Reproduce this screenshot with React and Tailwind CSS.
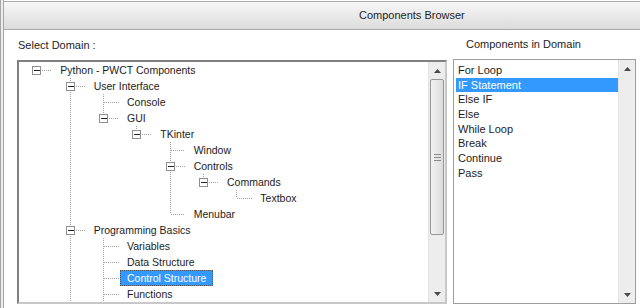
const W = 100 / 3;

const TREE = [
  { label: "Python - PWCT Components", level: 0, open: true, last: true, guides: [], root: true },
  { label: "User Interface", level: 1, open: true, last: false, guides: [false] },
  { label: "Console", level: 2, last: false, guides: [false, true] },
  { label: "GUI", level: 2, open: true, last: true, guides: [false, true] },
  { label: "TKinter", level: 3, open: true, last: true, guides: [false, true, false] },
  { label: "Window", level: 4, last: false, guides: [false, true, false, false] },
  { label: "Controls", level: 4, open: true, last: false, guides: [false, true, false, false] },
  { label: "Commands", level: 5, open: true, last: true, guides: [false, true, false, false, true] },
  { label: "Textbox", level: 6, last: true, guides: [false, true, false, false, true, false] },
  { label: "Menubar", level: 4, last: true, guides: [false, true, false, false] },
  { label: "Programming Basics", level: 1, open: true, last: false, guides: [false] },
  { label: "Variables", level: 2, last: false, guides: [false, true] },
  { label: "Data Structure", level: 2, last: false, guides: [false, true] },
  { label: "Control Structure", level: 2, last: false, guides: [false, true], selected: true },
  { label: "Functions", level: 2, last: false, guides: [false, true] },
];

const ITEMS = ["For Loop", "IF Statement", "Else IF", "Else", "While Loop", "Break", "Continue", "Pass"];

const LINE = "#a3a3a3";

// dotted tree connectors for one row
function Connectors({ n }) {
  const width = (n.level + 1) * W;
  const cx = Math.floor(n.level * W + W / 2) + 0.5;
  const end = Math.floor(width) - 1;
  return (
    <svg width={width} height="16" className="shrink-0" shapeRendering="crispEdges">
      {n.guides.map((g, k) => {
        if (!g) return null;
        const x = Math.floor(k * W + W / 2) + 0.5;
        return <line key={k} x1={x} y1="0" x2={x} y2="16" stroke={LINE} strokeDasharray="1 1" />;
      })}
      {!n.root && <line x1={cx} y1="0" x2={cx} y2="8" stroke={LINE} strokeDasharray="1 1" />}
      {!n.last && <line x1={cx} y1="8" x2={cx} y2="16" stroke={LINE} strokeDasharray="1 1" />}
      <line x1={n.open ? cx + 5 : cx} y1="8.5" x2={end} y2="8.5" stroke={LINE} strokeDasharray="1 1" />
      {n.open && (
        <g>
          <rect x={cx - 4.5} y="4.5" width="8" height="8" fill="#fff" stroke="#8f8f8f" />
          <line x1={cx - 2.5} y1="8.5" x2={cx + 3.5} y2="8.5" stroke="#222" />
        </g>
      )}
    </svg>
  );
}

function TreeRow({ n }) {
  return (
    <div className="flex h-[16px] items-center">
      <Connectors n={n} />
      <span
        className={
          n.selected
            ? "h-[16px] px-[6px] leading-[14px] bg-[#3399ff] text-white border border-dotted border-[#555]"
            : "h-[16px] px-[7px] leading-[16px] text-[#1c1c1c]"
        }
      >
        {n.label}
      </span>
    </div>
  );
}

function Arrow({ up }) {
  return (
    <svg width="7" height="4" viewBox="0 0 7 4">
      {up ? <path d="M3.5 0L7 4H0Z" fill="#4a4a4a" /> : <path d="M0 0H7L3.5 4Z" fill="#4a4a4a" />}
    </svg>
  );
}

function ScrollBar({ thumb }) {
  return (
    <div className="w-[17px] flex flex-col bg-[#ededed] border-l border-[#e3e3e3]">
      <div className="h-[17px] flex items-center justify-center">
        <Arrow up />
      </div>
      {thumb ? (
        <div className="mx-[1px] h-[156px] rounded-[2px] border border-[#979797] bg-gradient-to-r from-[#f2f2f2] to-[#dcdcdc] flex items-center justify-center">
          <div className="flex flex-col gap-[2px]">
            <div className="w-[7px] h-px bg-[#8a8a8a]" />
            <div className="w-[7px] h-px bg-[#8a8a8a]" />
            <div className="w-[7px] h-px bg-[#8a8a8a]" />
          </div>
        </div>
      ) : null}
      <div className="flex-1" />
      <div className="h-[17px] flex items-center justify-center">
        <Arrow />
      </div>
    </div>
  );
}

export default function App() {
  return (
    <div
      className="w-[640px] h-[308px] overflow-hidden bg-white flex text-[11px]"
      style={{ fontFamily: '"Liberation Sans", Arial, sans-serif' }}
    >
      <div className="w-[4px] shrink-0 border-l border-r border-[#a6a6a6] bg-[#ececec]" />
      <div className="flex-1 flex flex-col">
        <div className="h-[29px] shrink-0 mt-px border-t border-b border-[#a9a9a9] bg-gradient-to-b from-[#f7f7f7] to-[#dcdcdc] flex items-center pl-[355px] text-[#1e1e1e]">
          Components Browser
        </div>
        <div className="flex-1 flex pl-[13px] pr-[4px]">
          <div className="w-[430px] flex flex-col">
            <div className="h-[30px] flex items-center pl-[1px] text-[#1e1e1e]">Select Domain :</div>
            <div className="h-[244px] flex border-2 border-t-[#808080] border-l-[#808080] border-b-[#c8c8c8] border-r-[#c8c8c8]">
              <div className="flex-1 pl-[1px] overflow-hidden text-[10.5px]">
                {TREE.map((n) => (
                  <TreeRow key={n.label} n={n} />
                ))}
              </div>
              <ScrollBar thumb />
            </div>
          </div>
          <div className="w-[6px]" />
          <div className="w-[183px] flex flex-col">
            <div className="h-[29px] flex items-center pl-[13px] text-[#1e1e1e]">Components in Domain</div>
            <div className="h-[245px] flex border border-[#9d9d9d]">
              <div className="flex-1 pt-[3px] pl-[2px]">
                {ITEMS.map((t, i) => (
                  <div
                    key={t}
                    className={
                      i === 1
                        ? "h-[14.7px] leading-[14.7px] pl-[2px] bg-[#3399ff] text-white"
                        : "h-[14.7px] leading-[14.7px] pl-[2px] text-[#1c1c1c]"
                    }
                  >
                    {t}
                  </div>
                ))}
              </div>
              <ScrollBar />
            </div>
          </div>
        </div>
      </div>
    </div>
  );
}
